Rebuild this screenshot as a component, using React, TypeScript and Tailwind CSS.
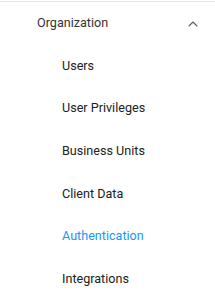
import { ChevronUp } from "lucide-react";

const items = [
  { label: "Users" },
  { label: "User Privileges" },
  { label: "Business Units" },
  { label: "Client Data" },
  { label: "Authentication", active: true },
  { label: "Integrations" },
];

export default function App() {
  return (
    <div className="w-[215px] h-[298px] bg-white pt-px font-['Roboto',sans-serif] overflow-hidden">
      <div className="border-t border-[#e6e6e6]">
        <div className="flex items-center justify-between h-[43px] pl-[37px] pr-[14px]">
          <span className="text-[12.6px] text-[#333333]">Organization</span>
          <ChevronUp size={16} strokeWidth={1.6} className="text-[#5f5f5f]" />
        </div>
        <ul>
          {items.map((it) => (
            <li
              key={it.label}
              className={`flex items-center h-[42.6px] pl-[62px] text-[12.6px] ${
                it.active ? "text-[#2196f3]" : "text-[#212121]"
              }`}
            >
              {it.label}
            </li>
          ))}
        </ul>
      </div>
    </div>
  );
}
